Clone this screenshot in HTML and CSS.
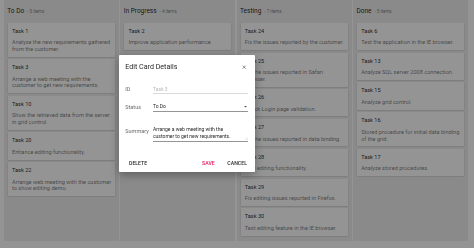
FILE: index.html
```html
<!DOCTYPE html>
<html>
<head>
<meta charset="utf-8">
<link rel="stylesheet" href="styles.css">
</head>
<body>
<div class="board">
  <div class="col">
    <div class="col-head"><span class="col-title">To Do</span><span class="col-count">- 5 items</span></div>
    <div class="cards">
      <div class="card"><div class="card-title">Task 1</div><div class="card-text">Analyze the new requirements gathered from the customer.</div></div>
      <div class="card"><div class="card-title">Task 3</div><div class="card-text">Arrange a web meeting with the customer to get new requirements.</div></div>
      <div class="card"><div class="card-title">Task 10</div><div class="card-text">Show the retrieved data from the server in grid control.</div></div>
      <div class="card"><div class="card-title">Task 20</div><div class="card-text">Enhance editing functionality.</div></div>
      <div class="card"><div class="card-title">Task 22</div><div class="card-text">Arrange web meeting with the customer to show editing demo.</div></div>
    </div>
  </div>
  <div class="col">
    <div class="col-head"><span class="col-title">In Progress</span><span class="col-count">- 4 items</span></div>
    <div class="cards">
      <div class="card"><div class="card-title">Task 2</div><div class="card-text">Improve application performance</div></div>
    </div>
  </div>
  <div class="col">
    <div class="col-head"><span class="col-title">Testing</span><span class="col-count">- 7 items</span></div>
    <div class="cards">
      <div class="card"><div class="card-title">Task 24</div><div class="card-text">Fix the issues reported by the customer.</div></div>
      <div class="card"><div class="card-title">Task 25</div><div class="card-text">Fix the issues reported in Safari browser.</div></div>
      <div class="card"><div class="card-title">Task 26</div><div class="card-text">Check Login page validation.</div></div>
      <div class="card"><div class="card-title">Task 27</div><div class="card-text">Fix the issues reported in data binding.</div></div>
      <div class="card"><div class="card-title">Task 28</div><div class="card-text">Test editing functionality.</div></div>
      <div class="card"><div class="card-title">Task 29</div><div class="card-text">Fix editing issues reported in Firefox.</div></div>
      <div class="card"><div class="card-title">Task 30</div><div class="card-text">Test editing feature in the IE browser.</div></div>
    </div>
  </div>
  <div class="col">
    <div class="col-head"><span class="col-title">Done</span><span class="col-count">- 5 items</span></div>
    <div class="cards">
      <div class="card"><div class="card-title">Task 6</div><div class="card-text">Test the application in the IE browser.</div></div>
      <div class="card"><div class="card-title">Task 13</div><div class="card-text">Analyze SQL server 2008 connection.</div></div>
      <div class="card"><div class="card-title">Task 15</div><div class="card-text">Analyze grid control.</div></div>
      <div class="card"><div class="card-title">Task 16</div><div class="card-text">Stored procedure for initial data binding of the grid.</div></div>
      <div class="card"><div class="card-title">Task 17</div><div class="card-text">Analyze stored procedures.</div></div>
    </div>
  </div>
</div>
<div class="overlay"></div>
<div class="dialog">
  <div class="dlg-head">
    <span class="dlg-title">Edit Card Details</span>
    <svg class="close" viewBox="0 0 10 10"><path d="M1.5 1.5L8.5 8.5M8.5 1.5L1.5 8.5" stroke="#3c3c3c" stroke-width="1.3" fill="none"/></svg>
  </div>
  <div class="dlg-body">
    <div class="row r1">
      <div class="label">ID</div>
      <div class="field disabled"><span>Task 3</span></div>
    </div>
    <div class="row r2">
      <div class="label">Status</div>
      <div class="field"><span>To Do</span><svg class="caret" viewBox="0 0 6 3"><path d="M0 0H6L3 3Z" fill="#555"/></svg></div>
    </div>
    <div class="row r3">
      <div class="label">Summary</div>
      <div class="field area"><span>Arrange a web meeting with the customer to get new requirements.</span><svg class="grip" viewBox="0 0 6 6"><path d="M5.5 1L1 5.5M5.5 3.5L3.5 5.5" stroke="#888" stroke-width="0.6" fill="none"/></svg></div>
    </div>
  </div>
  <div class="dlg-foot">
    <span class="btn">Delete</span>
    <span class="spacer"></span>
    <span class="btn primary">Save</span>
    <span class="btn">Cancel</span>
  </div>
</div>
</body>
</html>
```
FILE: styles.css
```css
* { box-sizing: border-box; margin: 0; padding: 0; }
html, body {
  width: 474px;
  height: 248px;
  overflow: hidden;
  background: #ffffff;
  font-family: Roboto, "Noto Sans", sans-serif;
}
.board {
  display: grid;
  grid-template-columns: repeat(4, 1fr);
  column-gap: 1.5px;
  padding: 0 6px 0 4px;
  height: 241px;
}
.col {
  background: #eeeeee;
  display: flex;
  flex-direction: column;
  overflow: hidden;
}
.col-head {
  height: 22.7px;
  display: flex;
  align-items: center;
  padding-left: 3.3px;
  white-space: nowrap;
}
.col-title {
  font-size: 6.5px;
  color: rgba(0, 0, 0, 0.87);
}
.col-count {
  font-size: 4.5px;
  color: rgba(0, 0, 0, 0.5);
  margin-left: 3px;
}
.cards {
  display: flex;
  flex-direction: column;
  gap: 2.4px;
  padding: 0 4px;
}
.card {
  background: #ffffff;
  box-shadow: 0 0.5px 1.5px rgba(0, 0, 0, 0.22);
  padding: 5px 3.6px 4.2px 4px;
}
.card-title {
  font-size: 5.6px;
  line-height: 6.6px;
  font-weight: 400;
  color: rgba(0, 0, 0, 0.85);
}
.card-text {
  font-size: 5.6px;
  line-height: 6.6px;
  margin-top: 5.1px;
  color: rgba(0, 0, 0, 0.55);
}
.overlay {
  position: fixed;
  inset: 0;
  background: rgba(0, 0, 0, 0.42);
}
.dialog {
  position: absolute;
  left: 119px;
  top: 55px;
  width: 136px;
  height: 116.5px;
  background: #ffffff;
  border-radius: 1px;
  box-shadow: 0 3px 9px rgba(0, 0, 0, 0.3);
  display: flex;
  flex-direction: column;
}
.dlg-head {
  height: 23.5px;
  display: flex;
  align-items: center;
  justify-content: space-between;
  padding: 0 8.3px 0 6.3px;
}
.dlg-title {
  font-size: 7.1px;
  color: rgba(0, 0, 0, 0.87);
}
.close {
  width: 4.4px;
  height: 4.4px;
}
.dlg-body {
  padding: 0 7px 0 6.3px;
}
.row {
  display: flex;
  align-items: center;
}
.r1 { margin-top: 7px; }
.r2 { margin-top: 9.2px; }
.r3 { margin-top: 14.2px; align-items: flex-start; }
.label {
  width: 27.7px;
  flex: none;
  font-size: 5.5px;
  line-height: 7px;
  color: rgba(0, 0, 0, 0.62);
}
.r3 .label { margin-top: 1.6px; }
.field {
  flex: 1;
  display: flex;
  align-items: center;
  justify-content: space-between;
  font-size: 5px;
  line-height: 7px;
  color: rgba(0, 0, 0, 0.87);
  padding-bottom: 0.8px;
  border-bottom: 0.7px solid rgba(0, 0, 0, 0.42);
}
.field.disabled {
  color: rgba(0, 0, 0, 0.3);
  border-bottom-color: rgba(0, 0, 0, 0.14);
}
.field.area {
  align-items: flex-end;
  line-height: 6.7px;
  padding-bottom: 1.3px;
}
.caret {
  width: 3px;
  height: 1.5px;
  margin-right: 0.6px;
}
.grip {
  width: 3px;
  height: 3px;
  flex: none;
  margin-bottom: -0.6px;
}
.dlg-foot {
  margin-top: auto;
  height: 16.4px;
  display: flex;
  align-items: center;
  gap: 12.7px;
  padding: 0 8px 0 10px;
}
.spacer { flex: 1; }
.btn {
  font-size: 5.2px;
  font-weight: 500;
  text-transform: uppercase;
  color: rgba(0, 0, 0, 0.87);
}
.btn.primary { color: #e3165b; }
```
